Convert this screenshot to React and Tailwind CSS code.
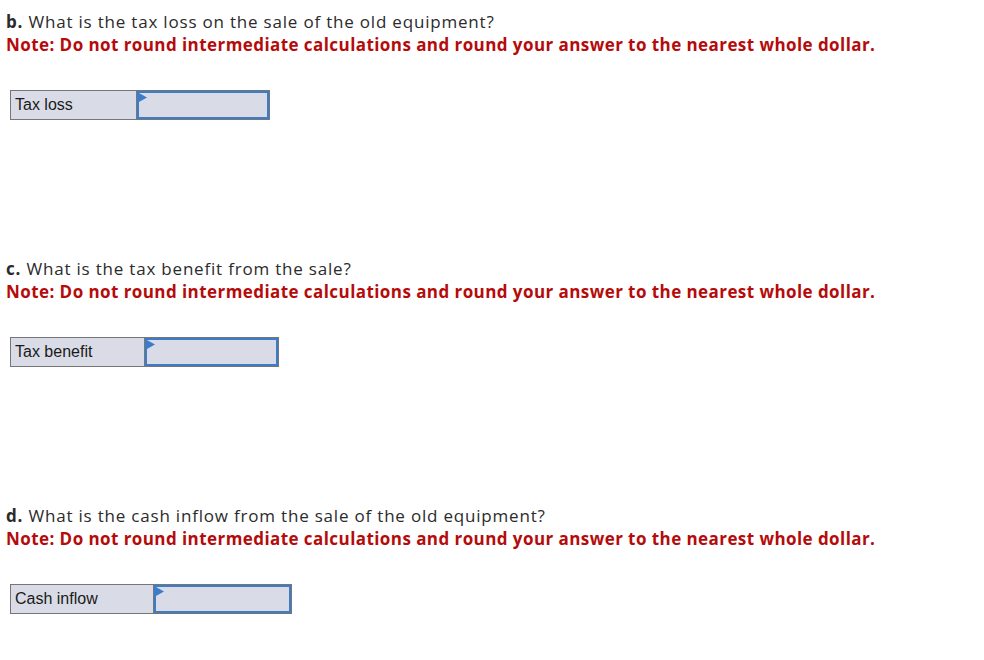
const SECTIONS = [
  { letter: 'b.', question: 'What is the tax loss on the sale of the old equipment?', label: 'Tax loss', labelW: 'w-[126px]', inputW: 'w-[132px]' },
  { letter: 'c.', question: 'What is the tax benefit from the sale?', label: 'Tax benefit', labelW: 'w-[134px]', inputW: 'w-[133px]' },
  { letter: 'd.', question: 'What is the cash inflow from the sale of the old equipment?', label: 'Cash inflow', labelW: 'w-[143px]', inputW: 'w-[137px]' },
]

function AnswerRow({ label, labelW, inputW }) {
  return (
    <div className="flex h-[30px] w-fit border border-[#767676] bg-[#d9dce6]">
      <div className={`${labelW} flex items-center pl-[4px] border-r border-[#767676] text-[16px] text-[#1a1a1a] font-['Liberation_Sans',Arial,sans-serif]`}>
        {label}
      </div>
      <div className={`${inputW} relative border-2 border-[#3d7cc9] bg-[#d9dce6]`}>
        <svg className="absolute left-0 top-0" width="8" height="9" viewBox="0 0 8 9">
          <path d="M0 0 L8 4.5 L0 9 Z" fill="#3d7cc9" />
        </svg>
      </div>
    </div>
  )
}

export default function App() {
  return (
    <div className="w-[984px] h-[660px] overflow-hidden bg-white pl-[6px] pt-[10px] font-['Open_Sans',sans-serif] flex flex-col gap-[137px]">
      {SECTIONS.map(s => (
        <div key={s.letter}>
          <p className="text-[17px] leading-[24px] tracking-[0.8px] text-[#2b2b2b]">
            <span className="font-bold">{s.letter}</span> {s.question}
          </p>
          <p className="text-[17px] leading-[22px] tracking-[0.43px] font-bold text-[#b50b0b]">
            Note: Do not round intermediate calculations and round your answer to the nearest whole dollar.
          </p>
          <div className="mt-[34px] ml-[4px]">
            <AnswerRow {...s} />
          </div>
        </div>
      ))}
    </div>
  )
}
